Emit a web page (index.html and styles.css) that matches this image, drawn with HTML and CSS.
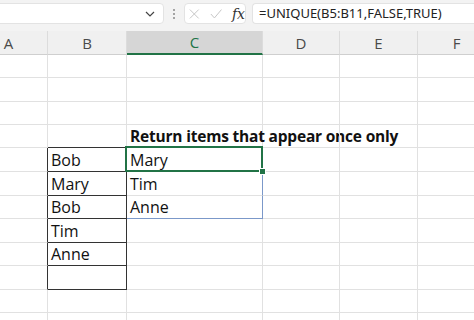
FILE: index.html
```html
<!DOCTYPE html>
<html lang="en">
<head>
  <meta charset="UTF-8" />
  <title>UNIQUE example</title>
  <link rel="stylesheet" href="styles.css">
</head>
<body>
  <!-- formula bar -->
  <div class="formula-bar">
    <div class="name-box">
      <svg class="chevron" width="10" height="6" viewBox="0 0 10 6"><path d="M1 1 L5 5 L9 1" fill="none" stroke="#444" stroke-width="1.2"/></svg>
    </div>
    <div class="grip"><span></span><span></span><span></span></div>
    <div class="fx-box">
      <svg width="12" height="12" viewBox="0 0 12 12"><path d="M1 1 L11 11 M11 1 L1 11" stroke="#c4c4c4" stroke-width="1.1"/></svg>
      <svg width="14" height="12" viewBox="0 0 14 12"><path d="M1 6 L5 10.5 L13 1" fill="none" stroke="#c4c4c4" stroke-width="1.1"/></svg>
      <span class="fx">fx</span>
    </div>
    <div class="formula">=UNIQUE(B5:B11,FALSE,TRUE)</div>
  </div>

  <!-- sheet -->
  <div class="sheet">
    <div class="hdr">A</div>
    <div class="hdr">B</div>
    <div class="hdr active">C</div>
    <div class="hdr">D</div>
    <div class="hdr">E</div>
    <div class="hdr">F</div>

    <!-- row 1 -->
    <div class="cell"></div><div class="cell"></div><div class="cell"></div><div class="cell"></div><div class="cell"></div><div class="cell"></div>
    <!-- row 2 -->
    <div class="cell"></div><div class="cell"></div><div class="cell"></div><div class="cell"></div><div class="cell"></div><div class="cell"></div>
    <!-- row 3 -->
    <div class="cell"></div><div class="cell"></div><div class="cell"></div><div class="cell"></div><div class="cell"></div><div class="cell"></div>
    <!-- row 4 -->
    <div class="cell"></div><div class="cell tb-top"></div><div class="cell spill-top"><span class="title">Return items that appear once only</span></div><div class="cell"></div><div class="cell"></div><div class="cell"></div>
    <!-- row 5 -->
    <div class="cell tb-left"></div><div class="cell tb">Bob</div><div class="cell spill selected">Mary</div><div class="cell"></div><div class="cell"></div><div class="cell"></div>
    <!-- row 6 -->
    <div class="cell tb-left"></div><div class="cell tb">Mary</div><div class="cell spill">Tim</div><div class="cell"></div><div class="cell"></div><div class="cell"></div>
    <!-- row 7 -->
    <div class="cell tb-left"></div><div class="cell tb">Bob</div><div class="cell spill spill-end">Anne</div><div class="cell"></div><div class="cell"></div><div class="cell"></div>
    <!-- row 8 -->
    <div class="cell tb-left"></div><div class="cell tb">Tim</div><div class="cell"></div><div class="cell"></div><div class="cell"></div><div class="cell"></div>
    <!-- row 9 -->
    <div class="cell tb-left"></div><div class="cell tb">Anne</div><div class="cell"></div><div class="cell"></div><div class="cell"></div><div class="cell"></div>
    <!-- row 10 -->
    <div class="cell tb-left"></div><div class="cell tb"></div><div class="cell"></div><div class="cell"></div><div class="cell"></div><div class="cell"></div>
    <!-- row 11 -->
    <div class="cell"></div><div class="cell"></div><div class="cell"></div><div class="cell"></div><div class="cell"></div><div class="cell"></div>
    <!-- row 12 (cut off) -->
    <div class="cell last"></div><div class="cell last"></div><div class="cell last"></div><div class="cell last"></div><div class="cell last"></div><div class="cell last"></div>
  </div>
</body>
</html>
```

FILE: styles.css
```css
/* ==========================
   PAGE
=========================== */
body {
  margin: 0;
  width: 474px;
  height: 320px;
  overflow: hidden;
  background: #ffffff;
  font-family: 'Noto Sans', sans-serif;
}

/* ==========================
   FORMULA BAR
=========================== */
.formula-bar {
  display: flex;
  align-items: flex-start;
  height: 31px;
  padding-top: 3px;
  box-sizing: border-box;
  background: #f3f3f3;
  margin-left: -4px;
}

.name-box {
  width: 168px;
  height: 21px;
  box-sizing: border-box;
  background: #fff;
  border: 1px solid #e3e3e3;
  border-radius: 4px;
  display: flex;
  align-items: center;
  justify-content: flex-end;
  padding-right: 8px;
}

.grip {
  width: 20px;
  height: 21px;
  display: flex;
  flex-direction: column;
  align-items: center;
  justify-content: center;
  gap: 2px;
}

.grip span {
  width: 2px;
  height: 2px;
  background: #8a8a8a;
  border-radius: 1px;
}

.fx-box {
  width: 62px;
  height: 21px;
  box-sizing: border-box;
  background: #fff;
  border: 1px solid #e3e3e3;
  border-radius: 4px;
  display: flex;
  align-items: center;
  gap: 10px;
  padding-left: 4px;
}

.fx {
  font-family: 'DejaVu Serif', serif;
  font-style: italic;
  font-size: 14px;
  color: #333;
}

.formula {
  flex: 1;
  height: 21px;
  margin-left: 6px;
  box-sizing: border-box;
  background: #fff;
  border: 1px solid #e3e3e3;
  border-radius: 4px 0 0 4px;
  border-right: none;
  padding-left: 6px;
  font-size: 13px;
  line-height: 19px;
  color: #222;
}

/* ==========================
   GRID
=========================== */
.sheet {
  display: grid;
  grid-template-columns: 78px 79px 136px 77px 78px 78px;
  grid-template-rows: 24px 23px 24px 23px 23px 24px 24px 23px 24px 23px 24px 23px 7px;
  margin-left: -30px;
  height: 289px;
  overflow: hidden;
}

.hdr {
  background: #f0f0f0;
  border-right: 1px solid #dcdcdc;
  border-bottom: 1px solid #cfcfcf;
  color: #4a4a4a;
  font-family: 'Open Sans', sans-serif;
  font-size: 15px;
  display: flex;
  align-items: center;
  justify-content: center;
}

.hdr.active {
  background: #d6d6d6;
  color: #217346;
  border-bottom: 2px solid #217346;
}

.cell {
  position: relative;
  border-right: 1px solid #e1e1e1;
  border-bottom: 1px solid #e1e1e1;
  font-family: 'Open Sans', sans-serif;
  font-size: 16px;
  color: #111;
  padding-left: 3px;
  display: flex;
  align-items: flex-end;
  line-height: 21px;
  white-space: nowrap;
  min-width: 0;
}

.cell.last {
  border-bottom: none;
}

.title {
  font-weight: bold;
  font-size: 15.5px;
  letter-spacing: -0.2px;
}

/* table around B5:B10 */
.tb-top { border-bottom-color: #333; }
.tb-left { border-right-color: #333; }
.tb {
  border-right-color: #333;
  border-bottom-color: #333;
}

/* spill range C5:C7 */
.spill-top { border-bottom-color: #7b98c9; overflow: visible; }
.spill { border-right-color: #7b98c9; }
.spill-end { border-bottom-color: #7b98c9; }

/* active cell */
.selected::after {
  content: '';
  position: absolute;
  left: -2px;
  top: -2px;
  right: -1px;
  bottom: -1px;
  border: 2px solid #217346;
}

.selected::before {
  content: '';
  position: absolute;
  right: -4px;
  bottom: -4px;
  width: 5px;
  height: 5px;
  background: #217346;
  border: 1px solid #fff;
  z-index: 1;
}
```
